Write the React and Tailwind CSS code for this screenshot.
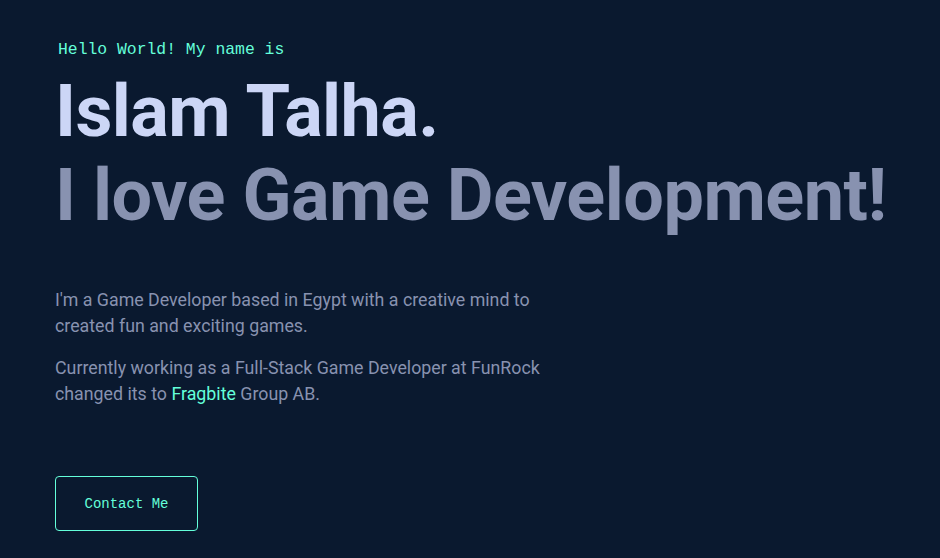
import React from 'react';

const Hero = () => {
  return (
    <section className="min-h-screen bg-[#0a192f] px-[55px] pt-[38px] font-['Roboto',sans-serif]">
      <h1 className="font-['Liberation_Mono',monospace] text-[16.4px] leading-[24px] text-[#64ffda] ml-[3px]">
        Hello World! My name is
      </h1>
      <h2 className="mt-[8px] whitespace-nowrap text-[72px] leading-[84px] font-bold tracking-[-0.6px] text-[#ccd6f6]">
        Islam Talha.
      </h2>
      <h3 className="whitespace-nowrap text-[72px] leading-[84px] font-bold tracking-[-0.5px] text-[#8892b0]">
        I love Game Development!
      </h3>
      <div className="mt-[49px] max-w-[505px] text-[17.8px] leading-[26px] text-[#8892b0]">
        <p>I'm a Game Developer based in Egypt with a creative mind to created fun and exciting games.</p>
        <p className="mt-[16px]">
          Currently working as a Full-Stack Game Developer at FunRock changed its to{' '}
          <span className="text-[#64ffda]">Fragbite</span> Group AB.
        </p>
      </div>
      <button className="mt-[69px] w-[143px] h-[55px] rounded-[4px] border border-[#64ffda] pt-[2px] font-['Liberation_Mono',monospace] text-[14px] text-[#64ffda]">
        Contact Me
      </button>
    </section>
  );
};

export default function App() {
  return <Hero />;
}
